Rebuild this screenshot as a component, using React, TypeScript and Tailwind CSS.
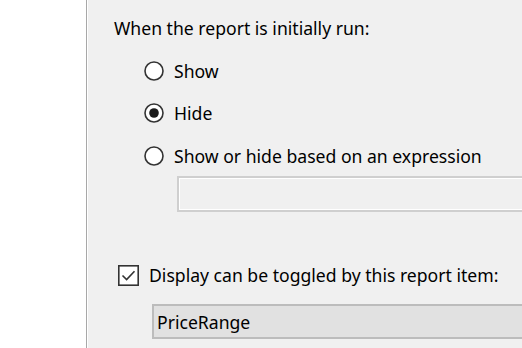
import React from "react";

function Radio({ checked }: { checked?: boolean }) {
  return (
    <svg width="20" height="20" viewBox="0 0 20 20" className="shrink-0">
      <circle cx="10" cy="10" r="9" fill="#ffffff" stroke="#333333" strokeWidth="1.6" />
      {checked && <circle cx="10" cy="10" r="4.8" fill="#1a1a1a" />}
    </svg>
  );
}

function Checkbox() {
  return (
    <svg width="21" height="21" viewBox="0 0 21 21" className="shrink-0">
      <rect x="0.8" y="0.8" width="19.4" height="19.4" fill="#ffffff" stroke="#333333" strokeWidth="1.6" />
      <path d="M4.5 10.5 L8.6 14.6 L16.5 6.2" fill="none" stroke="#333333" strokeWidth="1.6" />
    </svg>
  );
}

export default function App() {
  const font = { fontFamily: '"Segoe UI", "Noto Sans", "Open Sans", sans-serif' };
  return (
    <div className="flex w-[522px] h-[348px] overflow-hidden text-black" style={font}>
      <div className="w-[86px] shrink-0 bg-white" />
      <div className="w-px shrink-0 bg-[#a8a8a8]" />
      <div className="w-px shrink-0 bg-white" />
      <div className="flex-1 min-w-0 bg-[#f0f0f0] flex flex-col text-[17.6px] leading-none">
        <div className="mt-[14px] h-[28px] flex items-center pl-[26px] pt-[2px] whitespace-nowrap">
          When the report is initially run:
        </div>
        <div className="mt-[15px] h-[28px] flex items-center gap-[10px] pl-[56px] whitespace-nowrap">
          <Radio />
          <span className="pt-[2px]">Show</span>
        </div>
        <div className="mt-[14px] h-[28px] flex items-center gap-[10px] pl-[56px] whitespace-nowrap">
          <Radio checked />
          <span className="pt-[2px]">Hide</span>
        </div>
        <div className="mt-[15px] h-[28px] flex items-center gap-[10px] pl-[56px] whitespace-nowrap">
          <Radio />
          <span className="pt-[2px]">Show or hide based on an expression</span>
        </div>
        <div className="mt-[6px] pl-[89px]">
          <div className="h-[36px] w-[400px] border-2 border-[#cfcfcf] bg-[#f0f0f0] shadow-[inset_0_0_0_1px_#ffffff]" />
        </div>
        <div className="mt-[49px] h-[28px] flex items-center gap-[10px] pl-[30px] whitespace-nowrap">
          <Checkbox />
          <span className="pt-[2px]">Display can be toggled by this report item:</span>
        </div>
        <div className="mt-[15px] pl-[64px]">
          <div className="h-[35px] w-[420px] border-2 border-[#bcbcbc] bg-[#e1e1e1] flex items-center pl-[3px] pt-[2px] whitespace-nowrap">
            PriceRange
          </div>
        </div>
      </div>
    </div>
  );
}
